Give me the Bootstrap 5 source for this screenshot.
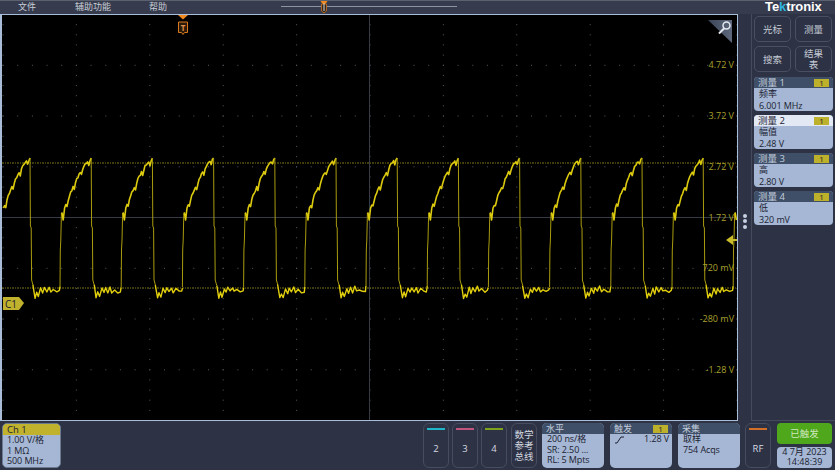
<!DOCTYPE html>
<html lang="zh"><head><meta charset="utf-8">
<title>Scope</title>
<link href="https://cdn.jsdelivr.net/npm/bootstrap@5.3.0/dist/css/bootstrap.min.css" rel="stylesheet">
<style>
html,body{width:835px;height:470px;overflow:hidden;margin:0}
body{background:#2d3345;font-family:"Open Sans","Noto Sans CJK SC",sans-serif;font-size:9px;line-height:11px;color:#1c2232}
.topbar{height:14px;background:#363c4e;border-top:1px solid #5c6170;color:#c9cdd6;flex:none}
.menu-a{position:absolute;top:0;font-size:9px;line-height:11px}
.m1{left:18px}.m2{left:75px}.m3{left:149px}
.logo{position:absolute;left:765px;top:-1px;font:700 13px/13px "Liberation Sans",sans-serif;color:#fff;letter-spacing:-.1px}
.logo span{color:#2fb4e0}
.midrow{height:407px;flex:none}
.scope{width:738px;height:407px;background:#000;border:solid #a9bdd9;border-width:1px 1px 1px 2px;flex:none}
.scope svg{display:block}
.side{flex:1 1 auto}
.dots{width:14px;flex:none;border-right:1px solid #454b5d;gap:1.5px;margin-top:-1px;padding-top:8px}
.dots i{width:4px;height:4px;border-radius:50%;background:#c5d0e2;display:block}
.panel{flex:1 1 auto;gap:4px;padding:2px 0 0 2px;border:solid #454b5d;border-width:1px 0;margin-top:-1px}
.sbtn{width:37px;height:26px;border:1px solid #4a5062;border-radius:5px;color:#c6cbd5;font-size:9.5px;line-height:11px;background:#2d3345}
.meas{width:79px;height:34px;border-radius:4px;overflow:hidden;background:#a5b7d4;flex:none}
.first{margin-top:1px}
.meas-h{height:11px;background:#3f4f68;color:#c4cedd;padding:0 4px 0 4px;font-size:9.5px;line-height:11px}
.meas.on .meas-h{background:#e2e9f4;color:#1c2232}
.tag{width:15px;height:8px;background:#bdb02a;color:#1c2232;font-size:8px;line-height:8px;text-align:center;display:block}
.meas-b{padding:0 3px 0 5px;line-height:11.5px;letter-spacing:-.1px}
.botrow{height:49px;flex:none;padding:2px 3px 0 2px}
.info{height:45px;border-radius:5px;overflow:hidden;background:#a5b7d4;flex:none}
.info-h{height:11px;background:#3f4f68;color:#c4cedd;padding:0 4px;line-height:11px}
.info-b{padding:0 3px 0 5px;line-height:10.5px;letter-spacing:-.1px}
.ch{width:59px;border:1px solid #6c7a90}
.ch .info-h{height:11px;background:#c0b22d;color:#1c2232;font-size:9.5px;padding-left:4px}
.ch .info-b{padding-left:4px}
.chbtn{width:26px;height:45px;border:1px solid #474d5f;border-radius:6px;color:#d5d9e0;flex:none;font-size:9.5px;background:#2d3345}
.chbtn b{display:block;width:18px;height:2px;margin:4px auto 0}
.chbtn span{margin:auto 0}
.wd{width:62px}
.c2{background:#1fb6c9}.c3{background:#c2557f}.c4{background:#7ea31c}.cr{background:#d2702a}
.gp3{margin-left:3px}.gp4{margin-left:4px}.gp5{margin-left:5px}.gp6{margin-left:6px}
.go{width:55px;height:21px;background:#4fa81c;border-radius:4px;color:#cfe6be;font-size:9.5px}
.date{width:55px;height:21px;background:#a5b7d4;border-radius:4px;text-align:center;line-height:10px;color:#1c2232;margin-top:3px}
.lab{font:9px "Open Sans",sans-serif;fill:#a8a12c}
.slope{flex:none;margin-left:-1px}
</style></head>
<body class="d-flex flex-column">
<div class="topbar position-relative">
<span class="menu-a m1">文件</span>
<span class="menu-a m2">辅助功能</span>
<span class="menu-a m3">帮助</span>
<svg class="position-absolute top-0 start-0" width="760" height="14">
<line x1="281" y1="5.5" x2="457" y2="5.5" stroke="#8d93a3"/>
<path d="M320.5 0h7l-2 3h-3z" fill="#f08a1e"/>
<path d="M321.5 3h5v7l-2.5 2-2.5-2z" fill="#33291f" stroke="#b5651d"/>
<line x1="324" y1="2" x2="324" y2="10" stroke="#d9d9d9"/>
</svg>
<span class="logo">Te<span>k</span>tronix</span>
</div>
<div class="midrow d-flex">
<div class="scope position-relative">
<svg id="sc" width="735" height="405" viewBox="2 15 735 405"></svg>
</div>
<div class="side d-flex">
<div class="dots d-flex flex-column align-items-center justify-content-center"><i></i><i></i><i></i></div>
<div class="panel d-flex flex-column">
<div class="d-flex gap-1"><div class="sbtn d-flex align-items-center justify-content-center">光标</div><div class="sbtn d-flex align-items-center justify-content-center">测量</div></div>
<div class="d-flex gap-1"><div class="sbtn d-flex align-items-center justify-content-center">搜索</div><div class="sbtn d-flex align-items-center justify-content-center text-center">结果<br>表</div></div>
<div class="meas first"><div class="meas-h d-flex justify-content-between align-items-center">测量 1<span class="tag">1</span></div><div class="meas-b">频率<br>6.001 MHz</div></div>
<div class="meas on"><div class="meas-h d-flex justify-content-between align-items-center">测量 2<span class="tag">1</span></div><div class="meas-b">幅值<br>2.48 V</div></div>
<div class="meas"><div class="meas-h d-flex justify-content-between align-items-center">测量 3<span class="tag">1</span></div><div class="meas-b">高<br>2.80 V</div></div>
<div class="meas"><div class="meas-h d-flex justify-content-between align-items-center">测量 4<span class="tag">1</span></div><div class="meas-b">低<br>320 mV</div></div>
</div>
</div>
</div>
<div class="botrow d-flex">
<div class="info ch"><div class="info-h">Ch 1</div><div class="info-b">1.00 V/格<br>1 MΩ<br>500 MHz</div></div>
<div class="d-flex flex-grow-1 justify-content-end">
<div class="chbtn d-flex flex-column align-items-center"><b class="c2"></b><span>2</span></div>
<div class="chbtn gp3 d-flex flex-column align-items-center"><b class="c3"></b><span>3</span></div>
<div class="chbtn gp3 d-flex flex-column align-items-center"><b class="c4"></b><span>4</span></div>
<div class="chbtn gp4 d-flex align-items-center justify-content-center text-center">数学<br>参考<br>总线</div>
<div class="info wd gp5"><div class="info-h">水平</div><div class="info-b">200 ns/格<br>SR: 2.50 ...<br>RL: 5 Mpts</div></div>
<div class="info wd gp6"><div class="info-h d-flex justify-content-between align-items-center">触发<span class="tag">1</span></div><div class="info-b d-flex justify-content-between"><svg class="slope" width="11" height="11"><path d="M1 9h2l4-6h3" fill="none" stroke="#1c2232"/></svg><span>1.28 V</span></div></div>
<div class="info wd gp6"><div class="info-h">采集</div><div class="info-b">取样<br>754 Acqs</div></div>
<div class="chbtn gp5 d-flex flex-column align-items-center"><b class="cr"></b><span>RF</span></div>
<div class="d-flex flex-column gp6"><div class="go d-flex align-items-center justify-content-center">已触发</div><div class="date">4 7月 2023<br>14:48:39</div></div>
</div>
</div>
<script>
(function(){
var s='',cx=369.5,cy=217.5,dx=73.4,dy=50.75,i,j;
var dot=[];
for(i=-5;i<=5;i++)for(j=-20;j<=20;j++){var y=cy+j*dy/5,x=cx+i*dx;if(y>15&&y<420&&x>2&&x<737)dot.push('M'+x.toFixed(1)+' '+y.toFixed(1)+'h1');}
for(j=-4;j<=4;j++)for(i=-25;i<=25;i++){var x2=cx+i*dx/5,y2=cy+j*dy;if(x2>2&&x2<737&&y2>15&&y2<420)dot.push('M'+x2.toFixed(1)+' '+y2.toFixed(1)+'h1');}
s+='<path d="'+dot.join('')+'" stroke="#555a64" stroke-width="1"/>';
s+='<line x1="2" x2="737" y1="217.5" y2="217.5" stroke="#343a46"/><line x1="369.5" x2="369.5" y1="15" y2="421" stroke="#343a46"/>';
s+='<line x1="2" x2="737" y1="163" y2="163" stroke="#8f8516" stroke-width=".9" stroke-dasharray="2 1 1 1"/><line x1="2" x2="737" y1="288" y2="288" stroke="#8f8516" stroke-width=".9" stroke-dasharray="2 1 1 1"/>';
var r=7;function rnd(){r=(r*16807)%2147483647;return r/2147483647;}
function inr(q){return q[0]>=2&&q[0]<=737;}
function pl(a,c,w){a=a.filter(inr);if(a.length<2)return '';return '<polyline fill="none" stroke="'+c+'" stroke-width="'+w+'" stroke-linejoin="round" points="'+a.map(function(q){return q[0].toFixed(1)+','+q[1].toFixed(1)}).join(' ')+'"/>';}
var P=61.2;
var low=[[33,285],[35,298],[36.7,293],[38.3,297],[40.7,288],[42.7,293],[44.3,288],[46.7,292],[49,287],[50.7,292],[53.3,289],[56.7,292],[59.3,291],[60,287]];
for(var k=-1;k<12;k++){
 var x0=30+k*P;
 s+=pl([[x0,158],[x0+.4,226],[x0+1.2,228],[x0+1.6,280],[x0+3,285]],'#a99c10',1);
 var lp=low.map(function(q,n){return [x0+q[0]-30+(rnd()-.5)*.5,q[1]+(rnd()-.5)*(n<2?1:2.4)];});
 s+=pl(lp,'#e2cf0e',1.4);
 var xr=x0+30;
 s+=pl([[xr,287],[xr+.3,250],[xr+.8,240],[xr+1.4,214]],'#a99c10',1);
 var up=[[xr+1.4,214],[xr+2,213],[xr+3.2,220],[xr+4.6,208]];
 var N=22,xs=xr+4.6,span=P-30-4.6;
 for(i=1;i<=N;i++){var t=i/N,xx=xs+t*span;var yy=208-50*(1-Math.pow(1-t,1.4));yy+=(i%6==2?5:(i%6==3?1.5:0))+(rnd()-.5)*2;if(i==N){yy=158;xx=x0+P;}up.push([xx,yy]);}
 s+=pl(up,'#dcca0e',1.6);
}
var labs=[['4.72 V',68],['3.72 V',119],['2.72 V',170],['1.72 V',221],['720 mV',271],['-280 mV',322],['-1.28 V',373]];
labs.forEach(function(l){s+='<text class="lab" x="734" y="'+l[1]+'" text-anchor="end">'+l[0]+'</text>';});
s+='<path d="M3 297h16l5 6-5 7H3z" fill="#c0b22d"/><text x="5" y="307.5" font-size="10" font-family="Open Sans" fill="#1c2232">C1</text>';
s+='<path d="M178 15h10l-5 4.5z" fill="#f08a1e"/><path d="M178.5 22h9v10.500h-3l-1.500 2-1.500-2h-3z" fill="#2b1a0a" stroke="#d87a1c"/><text x="183" y="31" font-size="8" font-weight="700" text-anchor="middle" font-family="Open Sans" fill="#e0914a">T</text>';
s+='<defs><linearGradient id="zg" x1="0" y1="0" x2="1" y2="0"><stop offset="0" stop-color="#3a4558"/><stop offset="1" stop-color="#5d687c"/></linearGradient></defs><path d="M708 20h24v23z" fill="url(#zg)"/><circle cx="726.500" cy="25.500" r="3.500" fill="none" stroke="#e4e9f1" stroke-width="1.500"/><line x1="724" y1="28.500" x2="719" y2="33.500" stroke="#e4e9f1" stroke-width="2"/>';
s+='<path d="M726 240l7-5v4h4v2h-4v4z" fill="#c9bb2a"/>';
document.getElementById('sc').innerHTML=s;
})();
</script>
<script src="https://cdn.jsdelivr.net/npm/bootstrap@5.3.0/dist/js/bootstrap.bundle.min.js"></script>
</body></html>
